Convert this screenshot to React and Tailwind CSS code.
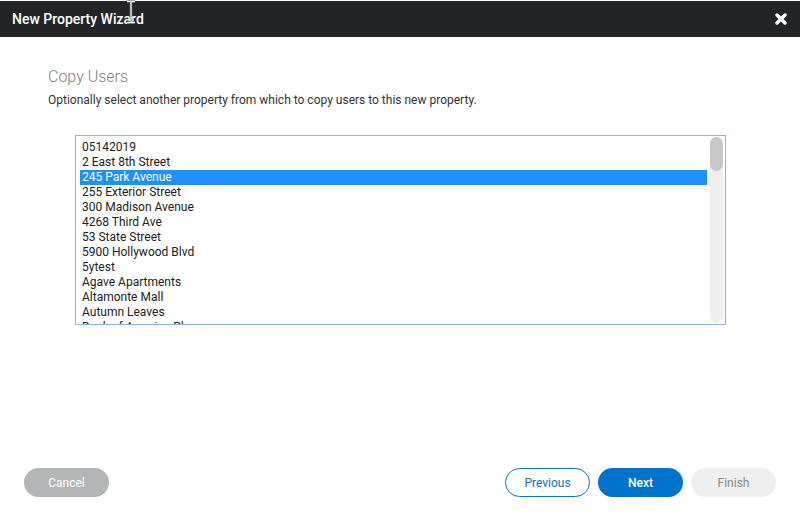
import React from "react";

const properties = [
  "05142019",
  "2 East 8th Street",
  "245 Park Avenue",
  "255 Exterior Street",
  "300 Madison Avenue",
  "4268 Third Ave",
  "53 State Street",
  "5900 Hollywood Blvd",
  "5ytest",
  "Agave Apartments",
  "Altamonte Mall",
  "Autumn Leaves",
  "Bank of America Plaza",
];

const App = () => {
  const selected = "245 Park Avenue";
  return (
    <div className="flex flex-col h-screen bg-white font-['Roboto','Liberation_Sans',sans-serif]">
      <div className="h-px bg-white" />
      <div className="relative flex items-center justify-between h-[36px] bg-[#232427] pl-[12px] pr-[13px]">
        <div className="text-white text-[14px] font-medium leading-none">New Property Wizard</div>
        <button className="flex items-center justify-center w-[12px] h-[12px]">
          <svg viewBox="0 0 12 12" className="w-[12px] h-[12px]">
            <path d="M2 2 L10 10 M10 2 L2 10" stroke="#fff" strokeWidth="3.4" strokeLinecap="round" />
          </svg>
        </button>
        {/* mouse cursor */}
        <svg viewBox="0 0 12 24" className="absolute left-[125px] top-[-1px] w-[12px] h-[24px]">
          <path d="M2 1.5 H10 M6 1.5 V22.5 M2 22.5 H10" stroke="#777" strokeWidth="2.6" fill="none" />
          <path d="M2 1.5 H10 M6 1.5 V22.5 M2 22.5 H10" stroke="#fff" strokeWidth="1" fill="none" />
        </svg>
      </div>

      <div className="flex-1 flex flex-col">
        <div className="px-[48px] pt-[30px]">
          <h2 className="text-[16px] leading-[20px] font-light text-[#808080]">Copy Users</h2>
          <p className="mt-[5px] text-[12px] leading-[16px] text-[#333]">
            Optionally select another property from which to copy users to this new property.
          </p>
        </div>

        <div className="ml-[75px] mt-[27px] w-[651px] h-[190px] border border-[#8db2ee] flex bg-white">
          <ul className="flex-1 overflow-hidden pt-[4px] pl-[4px]">
            {properties.map((p) => (
              <li
                key={p}
                className={
                  p === selected
                    ? "h-[15px] leading-[15px] pl-[2px] text-[12px] bg-[#1e90ff] text-white"
                    : "h-[15px] leading-[15px] pl-[2px] text-[12px] text-[#222]"
                }
              >
                {p}
              </li>
            ))}
          </ul>
          <div className="w-[13px] ml-[3px] mr-[2px] my-px rounded-full bg-[#eeeeee] flex flex-col">
            <div className="h-[34px] rounded-full bg-[#c8c8c8]" />
          </div>
        </div>
      </div>

      <div className="flex items-center justify-between px-[24px] pb-[20px]">
        <button className="w-[85px] h-[29px] rounded-full bg-[#b4b5b7] text-white text-[12px]">
          Cancel
        </button>
        <div className="flex gap-[8px]">
          <button className="w-[85px] h-[29px] rounded-full border border-[#0a74cc] bg-white text-[#0a74cc] text-[12px]">
            Previous
          </button>
          <button className="w-[85px] h-[29px] rounded-full bg-[#0074cc] text-white text-[12px] font-medium">
            Next
          </button>
          <button className="w-[85px] h-[29px] rounded-full bg-[#efefef] text-[#8a8a8a] text-[12px]">
            Finish
          </button>
        </div>
      </div>
    </div>
  );
};

export default App;
